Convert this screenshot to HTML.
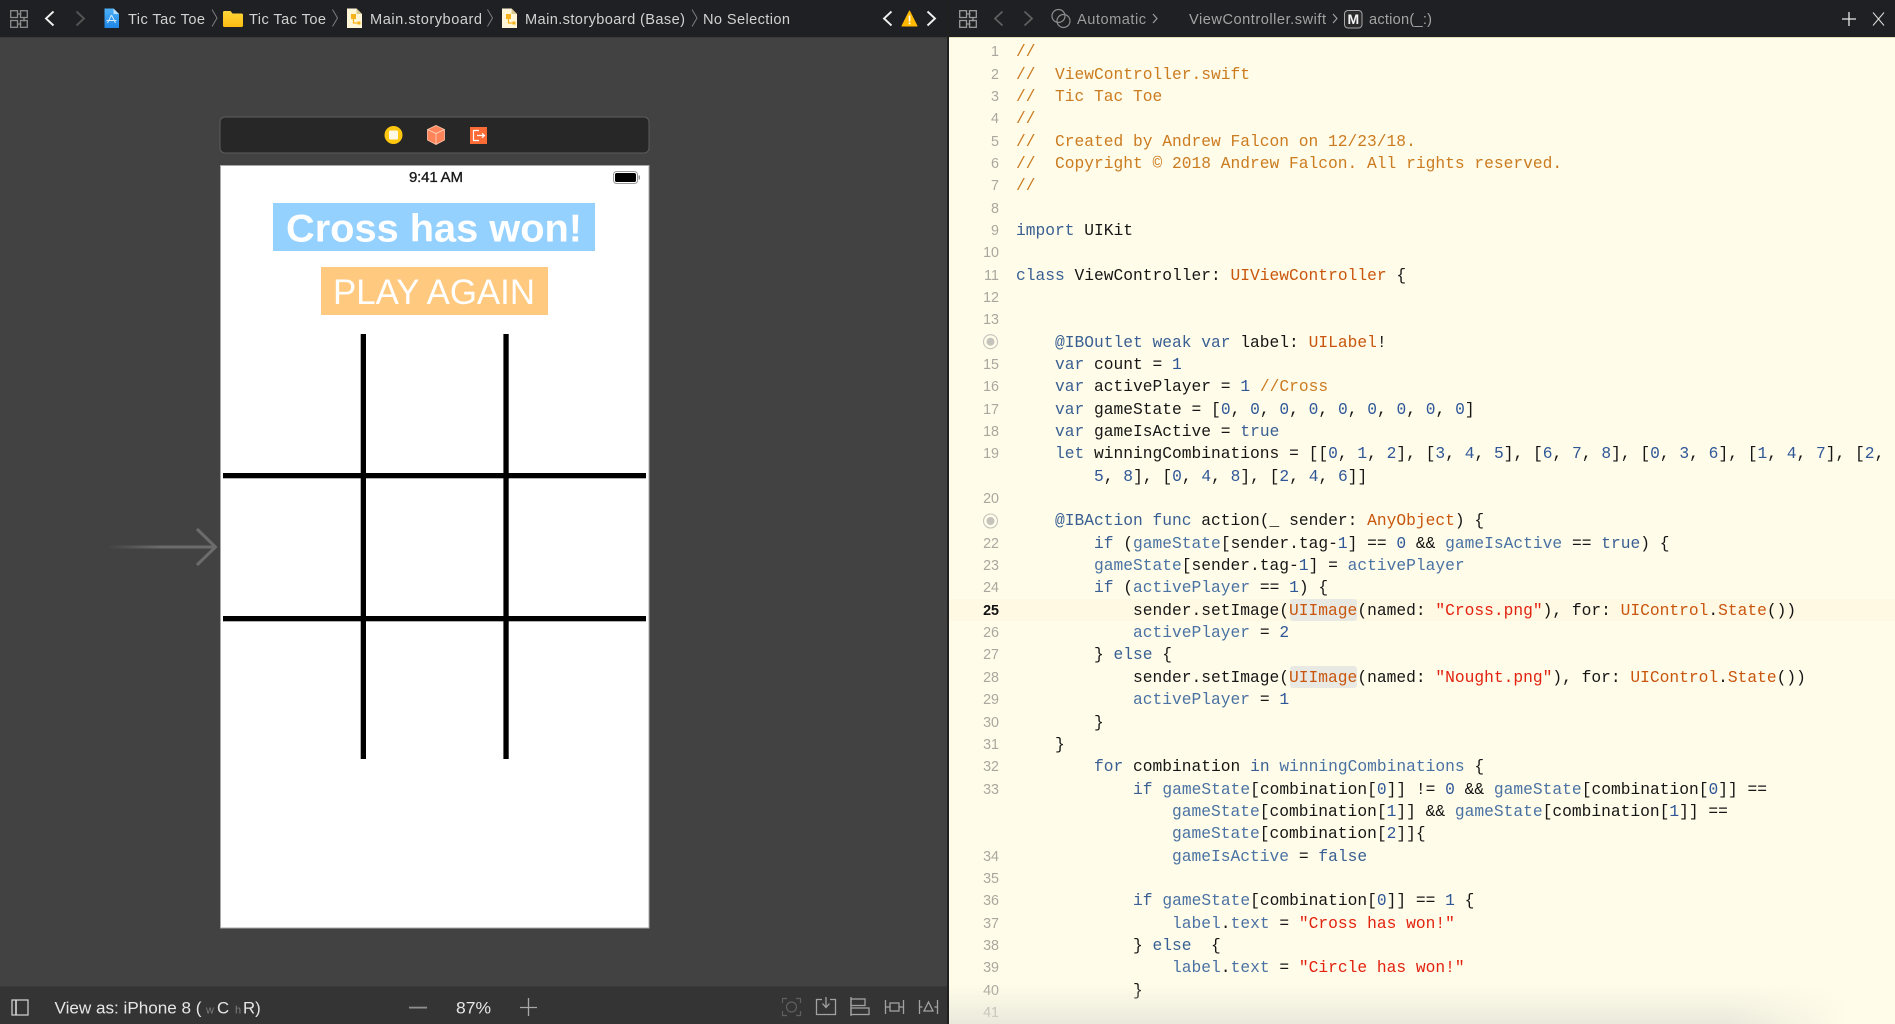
<!DOCTYPE html>
<html lang="en"><head><meta charset="utf-8"><title>Xcode</title>
<style>
html,body{margin:0;padding:0;background:#424242;width:1895px;height:1024px;overflow:hidden}
#cream{position:absolute;left:949px;top:38px;width:946px;height:986px;background:#fffce9}
#band{position:absolute;left:949px;top:599px;width:946px;height:22px;background:#fff8e3}
.hl{position:absolute;left:1290px;width:67px;height:22px;background:#e9e9e3;border-radius:3px}
pre{margin:0;position:absolute;font:16.25px/22.35px "Liberation Mono",monospace;color:#161616}
#code{left:1016px;top:41.2px}
#nums{left:960px;top:41.2px;width:39px;text-align:right;color:#a8a89e;font:14.3px/22.35px "Liberation Sans",sans-serif}
#nums b{color:#111;font-weight:bold}
#shade{position:absolute;left:949px;top:985px;width:946px;height:39px;background:linear-gradient(to bottom,rgba(226,226,214,0),rgba(226,226,214,.75));-webkit-mask-image:linear-gradient(to right,#000 0,#000 82%,transparent 95%);mask-image:linear-gradient(to right,#000 0,#000 82%,transparent 95%)}
svg{position:absolute;left:0;top:0;display:block}
.c{color:#cb7b20}.k{color:#3a6093}.t{color:#c9560e}.s{color:#e2220f}.n{color:#2f5798}.p{color:#4a72a3}
text{font-family:"Liberation Sans",sans-serif}
</style></head><body>
<div id="cream"></div><div id="band"></div>
<div class="hl" style="top:599px"></div><div class="hl" style="top:666px"></div>
<pre id="nums">1
2
3
4
5
6
7
8
9
10
11
12
13

15
16
17
18
19

20

22
23
24
<b>25</b>
26
27
28
29
30
31
32
33


34
35
36
37
38
39
40
41</pre>
<pre id="code"><span class="c">//</span>
<span class="c">//  ViewController.swift</span>
<span class="c">//  Tic Tac Toe</span>
<span class="c">//</span>
<span class="c">//  Created by Andrew Falcon on 12/23/18.</span>
<span class="c">//  Copyright © 2018 Andrew Falcon. All rights reserved.</span>
<span class="c">//</span>

<span class="k">import</span> UIKit

<span class="k">class</span> ViewController: <span class="t">UIViewController</span> {


    <span class="k">@IBOutlet weak var</span> label: <span class="t">UILabel</span>!
    <span class="k">var</span> count = <span class="n">1</span>
    <span class="k">var</span> activePlayer = <span class="n">1</span> <span class="c">//Cross</span>
    <span class="k">var</span> gameState = [<span class="n">0</span>, <span class="n">0</span>, <span class="n">0</span>, <span class="n">0</span>, <span class="n">0</span>, <span class="n">0</span>, <span class="n">0</span>, <span class="n">0</span>, <span class="n">0</span>]
    <span class="k">var</span> gameIsActive = <span class="k">true</span>
    <span class="k">let</span> winningCombinations = [[<span class="n">0</span>, <span class="n">1</span>, <span class="n">2</span>], [<span class="n">3</span>, <span class="n">4</span>, <span class="n">5</span>], [<span class="n">6</span>, <span class="n">7</span>, <span class="n">8</span>], [<span class="n">0</span>, <span class="n">3</span>, <span class="n">6</span>], [<span class="n">1</span>, <span class="n">4</span>, <span class="n">7</span>], [<span class="n">2</span>,
        <span class="n">5</span>, <span class="n">8</span>], [<span class="n">0</span>, <span class="n">4</span>, <span class="n">8</span>], [<span class="n">2</span>, <span class="n">4</span>, <span class="n">6</span>]]

    <span class="k">@IBAction func</span> action(_ sender: <span class="t">AnyObject</span>) {
        <span class="k">if</span> (<span class="p">gameState</span>[sender.tag-<span class="n">1</span>] == <span class="n">0</span> &amp;&amp; <span class="p">gameIsActive</span> == <span class="k">true</span>) {
        <span class="p">gameState</span>[sender.tag-<span class="n">1</span>] = <span class="p">activePlayer</span>
        <span class="k">if</span> (<span class="p">activePlayer</span> == <span class="n">1</span>) {
            sender.setImage(<span class="t">UIImage</span>(named: <span class="s">"Cross.png"</span>), for: <span class="t">UIControl</span>.<span class="t">State</span>())
            <span class="p">activePlayer</span> = <span class="n">2</span>
        } <span class="k">else</span> {
            sender.setImage(<span class="t">UIImage</span>(named: <span class="s">"Nought.png"</span>), for: <span class="t">UIControl</span>.<span class="t">State</span>())
            <span class="p">activePlayer</span> = <span class="n">1</span>
        }
    }
        <span class="k">for</span> combination <span class="k">in</span> <span class="p">winningCombinations</span> {
            <span class="k">if</span> <span class="p">gameState</span>[combination[<span class="n">0</span>]] != <span class="n">0</span> &amp;&amp; <span class="p">gameState</span>[combination[<span class="n">0</span>]] ==
                <span class="p">gameState</span>[combination[<span class="n">1</span>]] &amp;&amp; <span class="p">gameState</span>[combination[<span class="n">1</span>]] ==
                <span class="p">gameState</span>[combination[<span class="n">2</span>]]{
                <span class="p">gameIsActive</span> = <span class="k">false</span>

            <span class="k">if</span> <span class="p">gameState</span>[combination[<span class="n">0</span>]] == <span class="n">1</span> {
                <span class="p">label</span>.<span class="p">text</span> = <span class="s">"Cross has won!"</span>
            } <span class="k">else</span>  {
                <span class="p">label</span>.<span class="p">text</span> = <span class="s">"Circle has won!"</span>
            }
</pre>
<div id="shade"></div>

<svg width="1895" height="1024" viewBox="0 0 1895 1024" xmlns="http://www.w3.org/2000/svg">
<defs>
<linearGradient id="arr" x1="107" x2="217" y1="0" y2="0" gradientUnits="userSpaceOnUse"><stop offset="0" stop-color="#6c6c6c" stop-opacity="0"/><stop offset=".5" stop-color="#6c6c6c"/></linearGradient>
<linearGradient id="fold" x1="0" x2="0" y1="0" y2="1"><stop offset="0" stop-color="#ffd43a"/><stop offset="1" stop-color="#fdbd12"/></linearGradient>
<linearGradient id="app" x1="0" x2="0" y1="0" y2="1"><stop offset="0" stop-color="#4cb0f7"/><stop offset="1" stop-color="#1f86e6"/></linearGradient>
</defs>

<!-- top bars -->
<rect x="0" y="0" width="1895" height="37" fill="#1f2023"/>
<rect x="949" y="37" width="946" height="1" fill="#e5dfb9"/>
<rect x="0" y="37" width="947" height="1" fill="#393939"/>
<rect x="947" y="0" width="2" height="1024" fill="#202020"/>

<!-- left toolbar -->
<g fill="none" stroke="#8c8c8c" stroke-width="1.3">
<rect x="10.7" y="10.7" width="6.8" height="6.8"/><rect x="20.5" y="10.7" width="6.8" height="6.8"/><rect x="10.7" y="20.5" width="6.8" height="6.8"/><rect x="20.5" y="20.5" width="6.8" height="6.8"/>
<path d="M17.5 14h4M24 17.5v4M17.5 24h4"/>
</g>
<path d="M53.5 11.5 46 18.5l7.500 7" fill="none" stroke="#f0f0f0" stroke-width="1.9"/>
<path d="M76.500 11.500 84 18.500l-7.500 7" fill="none" stroke="#545454" stroke-width="1.9"/>
<path d="M104.500 8.500h9l5.500 5.500v14h-14.500z" fill="url(#app)"/><path d="M113.500 8.500v5.500h5.500z" fill="#bfe2fb"/>
<path d="M111.500 15l-4 8M111.500 15l4 8M106.500 20.500h10" stroke="#cfe9fd" stroke-width="1" fill="none"/>
<text x="128" y="24" font-size="14.600" fill="#d2d2d2" textLength="77">Tic Tac Toe</text>
<path d="M212 9.500l5 8.500-5 8.500" fill="none" stroke="#7d7d7d" stroke-width="1"/>
<path d="M223 12.500a1.500 1.500 0 0 1 1.500-1.500h6l2 2.500h9a1.500 1.500 0 0 1 1.500 1.500v10.500a1.500 1.500 0 0 1-1.500 1.500h-17a1.500 1.500 0 0 1-1.500-1.500z" fill="url(#fold)"/>
<text x="249" y="24" font-size="14.600" fill="#d2d2d2" textLength="77">Tic Tac Toe</text>
<path d="M332.500 9.500l5 8.500-5 8.500" fill="none" stroke="#7d7d7d" stroke-width="1"/>
<g id="sb"><path d="M347 8.500h9.500l5.500 5.500v14h-15z" fill="#fff6d8"/><path d="M356.500 8.500v5.500h5.500z" fill="#d9c98f"/><rect x="351" y="14" width="5" height="5" fill="#f6b21a"/><path d="M353.500 19v4h5" stroke="#f6b21a" stroke-width="1.300" fill="none"/><rect x="357.500" y="21.500" width="3" height="3" fill="#f6b21a"/></g>
<text x="370" y="24" font-size="14.600" fill="#d2d2d2" textLength="112">Main.storyboard</text>
<path d="M487.500 9.500l5 8.500-5 8.500" fill="none" stroke="#7d7d7d" stroke-width="1"/>
<use href="#sb" transform="translate(155 0)"/>
<text x="525" y="24" font-size="14.600" fill="#d2d2d2" textLength="160">Main.storyboard (Base)</text>
<path d="M692 9.500l5 8.500-5 8.500" fill="none" stroke="#7d7d7d" stroke-width="1"/>
<text x="703" y="24" font-size="14.600" fill="#d2d2d2" textLength="87">No Selection</text>
<path d="M891.500 11.500 884 18.500l7.500 7" fill="none" stroke="#f0f0f0" stroke-width="1.900"/>
<path d="M909.500 11 917 26h-15z" fill="#ffb900" stroke="#ffb900" stroke-width="1" stroke-linejoin="round"/>
<rect x="908.700" y="15.500" width="1.700" height="6" fill="#fff"/><rect x="908.700" y="22.500" width="1.700" height="1.800" fill="#fff"/>
<path d="M927.500 11.500 935 18.500l-7.500 7" fill="none" stroke="#f0f0f0" stroke-width="1.900"/>

<!-- right toolbar -->
<g fill="none" stroke="#9a9a9a" stroke-width="1.300" transform="translate(949 0)">
<rect x="10.700" y="10.700" width="6.800" height="6.800"/><rect x="20.500" y="10.700" width="6.800" height="6.800"/><rect x="10.700" y="20.500" width="6.800" height="6.800"/><rect x="20.500" y="20.500" width="6.800" height="6.800"/>
<path d="M17.500 14h4M24 17.500v4M17.500 24h4"/>
</g>
<path d="M1002.500 11.500 995 18.500l7.500 7" fill="none" stroke="#5f5f5f" stroke-width="1.800"/>
<path d="M1024.500 11.500 1032 18.500l-7.500 7" fill="none" stroke="#5f5f5f" stroke-width="1.800"/>
<circle cx="1058.500" cy="16" r="6.500" fill="none" stroke="#8d8d8d" stroke-width="1.200"/><circle cx="1063.500" cy="21" r="6.500" fill="none" stroke="#8d8d8d" stroke-width="1.200"/>
<text x="1077" y="24" font-size="14.600" fill="#9d9d9d" textLength="69">Automatic</text>
<path d="M1153 14l4 4.500-4 4.500" fill="none" stroke="#9d9d9d" stroke-width="1.200"/>
<text x="1189" y="24" font-size="14.600" fill="#a4a4a4" textLength="137">ViewController.swift</text>
<path d="M1333 14l4 4.500-4 4.500" fill="none" stroke="#9d9d9d" stroke-width="1.200"/>
<rect x="1344.500" y="10.500" width="17.500" height="17.500" rx="3.500" fill="#2a2a2c" stroke="#a8a8a8" stroke-width="1"/>
<text x="1353.300" y="24" font-size="14" font-weight="bold" fill="#f2f2f2" text-anchor="middle">M</text>
<text x="1369" y="24" font-size="14.600" fill="#a4a4a4" textLength="63">action(_:)</text>
<path d="M1849 12v14M1842 19h14" stroke="#e8e8e8" stroke-width="1.300" fill="none"/>
<path d="M1873 12.500l11 13M1884 12.500l-11 13" stroke="#dcdcdc" stroke-width="1" fill="none"/>

<!-- scene dock -->
<rect x="220" y="117" width="429" height="36" rx="5" fill="#272727" stroke="#5c5c5c" stroke-width="1"/>
<circle cx="393.500" cy="135" r="9" fill="#ffc70f"/><rect x="389" y="130.500" width="9" height="9" rx="1.200" fill="#fff8e5"/>
<path d="M436 125.500l8.500 4v10.500l-8.500 4.500-8.500-4.500v-10.500z" fill="#ff8459" stroke="#ffc4ab" stroke-width=".8"/>
<path d="M427.500 129.500l8.500 4 8.500-4M436 133.500v11" fill="none" stroke="#ffd6c4" stroke-width=".8"/>
<rect x="470" y="127" width="17" height="17" fill="#fb6b35"/>
<path d="M479 130.500h-5.500v10h5.500M477 135.500h7M482 133.300l2.500 2.200-2.500 2.200" fill="none" stroke="#fff" stroke-width="1.200"/>

<!-- phone -->
<rect x="220.500" y="165.500" width="428.500" height="762.500" fill="#fff" stroke="#a8a8a8" stroke-width="1"/>
<text x="409" y="182" font-size="15" fill="#1a1a1a" stroke="#1a1a1a" stroke-width=".35" textLength="54">9:41 AM</text>
<rect x="613.500" y="171.500" width="24" height="12" rx="3" fill="none" stroke="#9a9a9a" stroke-width="1"/>
<rect x="615" y="173" width="21" height="9" rx="1.800" fill="#000"/><rect x="638.500" y="175.500" width="1.500" height="4" fill="#9a9a9a"/>

<rect x="273" y="203" width="322" height="48" fill="#94d1ff"/>
<text x="286" y="241.500" font-size="38.500" font-weight="bold" fill="#fff" textLength="296" lengthAdjust="spacingAndGlyphs">Cross has won!</text>
<rect x="321" y="267" width="227" height="48" fill="#ffc97f"/>
<text x="333" y="304" font-size="35.500" fill="#fff" textLength="202" lengthAdjust="spacingAndGlyphs">PLAY AGAIN</text>

<rect x="360.700" y="334" width="5.300" height="425" fill="#000"/>
<rect x="503.400" y="334" width="5.300" height="425" fill="#000"/>
<rect x="223" y="473" width="423" height="5.300" fill="#000"/>
<rect x="223" y="616" width="423" height="5.300" fill="#000"/>

<!-- entry arrow -->
<path d="M107 547H215" stroke="url(#arr)" stroke-width="3" fill="none"/>
<path d="M197 529l18.500 18-18.500 18" stroke="#6c6c6c" stroke-width="3" fill="none"/>

<!-- breakpoint dots -->
<g fill="#c4c4bc"><circle cx="990.500" cy="341.700" r="4"/><circle cx="990.500" cy="521" r="4"/></g>
<g fill="none" stroke="#c4c4bc" stroke-width="1.100"><circle cx="990.500" cy="341.700" r="7"/><circle cx="990.500" cy="521" r="7"/></g>

<!-- bottom bar -->
<rect x="0" y="987" width="947" height="37" fill="#343434"/>
<rect x="0" y="986" width="947" height="1" fill="#3a3a3a"/>
<rect x="12" y="1000" width="16" height="15" fill="none" stroke="#d8d8d8" stroke-width="1.200"/><path d="M16 1000v15" stroke="#d8d8d8" stroke-width="1.600"/>
<text x="54.500" y="1013.500" font-size="16.800" fill="#e6e6e6" textLength="147" lengthAdjust="spacingAndGlyphs">View as: iPhone 8 (</text>
<text x="206" y="1013.500" font-size="11" fill="#7d7d7d">w</text>
<text x="217" y="1013.500" font-size="16.800" fill="#e6e6e6">C</text>
<text x="235" y="1013.500" font-size="11" fill="#7d7d7d">h</text>
<text x="243" y="1013.500" font-size="16.800" fill="#e6e6e6">R)</text>
<rect x="409" y="1006.700" width="18" height="1.800" fill="#8f8f8f"/>
<text x="456" y="1013.500" font-size="16.800" fill="#e6e6e6" textLength="35" lengthAdjust="spacingAndGlyphs">87%</text>
<path d="M528.500 998v18M520 1007.500h17" stroke="#a8a8a8" stroke-width="1.300" fill="none"/>

<g fill="none" stroke="#5f5f5f" stroke-width="1.200"><path d="M782.500 1003v-4.500h4.500M796 998.500h4.500v4.500M782.500 1011v4.500h4.500M796 1015.500h4.500V1011"/><circle cx="791.500" cy="1007" r="5"/></g>
<g fill="none" stroke="#a2a2a2" stroke-width="1.300">
<path d="M822 999.500h-5.500v15h19v-15H830M826 997v10M822.500 1003.500l3.500 4 3.500-4"/>
<rect x="851" y="999" width="14" height="6.500"/><rect x="851" y="1008" width="18" height="6.500"/><path d="M851 997v19"/>
<path d="M885.500 1000v14M903.500 1000v14M885.500 1007h4M899.500 1007h4"/><rect x="890" y="1003" width="9" height="8"/>
<path d="M919.500 1000v14M937.500 1000v14M919.500 1007h3M934.500 1007h3M928.500 1002l4.500 9h-9z"/>
</g>
</svg>
</body></html>
